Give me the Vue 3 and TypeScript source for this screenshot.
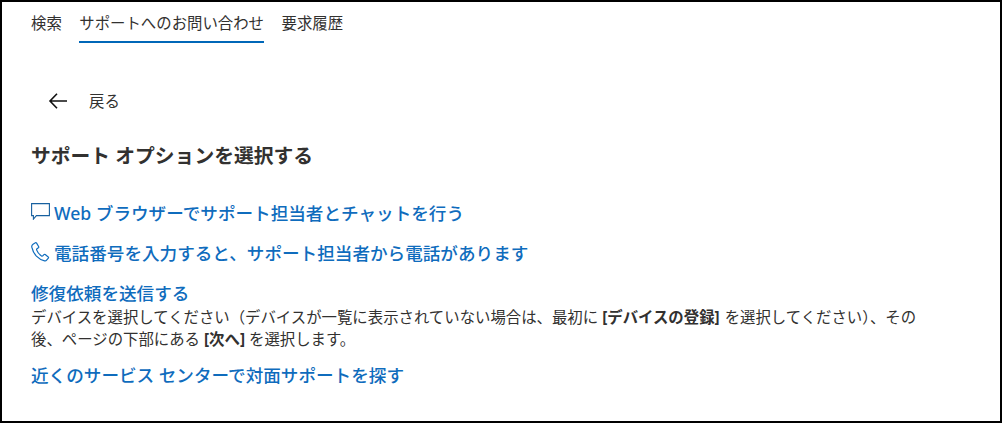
<script setup lang="ts">
const tabs = [
  { label: '検索', active: false },
  { label: 'サポートへのお問い合わせ', active: true },
  { label: '要求履歴', active: false },
]
</script>

<template>
  <div class="frame">
    <nav class="tabs">
      <a v-for="t in tabs" :key="t.label" class="tab" :class="{ active: t.active }">{{ t.label }}</a>
    </nav>
    <div class="back">
      <svg class="back-icon" width="20" height="20" viewBox="0 0 20 20" fill="none" stroke="#111" stroke-width="1.6">
        <path d="M19 10H2M9 2.800 2 10l7 7.200" />
      </svg>
      <span class="back-label">戻る</span>
    </div>
    <h1 class="title">サポート オプションを選択する</h1>
    <div class="options">
      <a class="link">
        <svg class="icon chat" width="19" height="17" viewBox="0 0 19 17" fill="none" stroke="#17609f" stroke-width="1.1">
          <path d="M.6.6h17.800v12H5.400l-3 3.500v-3.500H.6z" />
        </svg>
        <span>Web ブラウザーでサポート担当者とチャットを行う</span>
      </a>
      <a class="link">
        <svg class="icon phone" width="19" height="20" viewBox="0 0 19 20" fill="none" stroke="#0f6cbd" stroke-width="1.2">
          <path d="M2 2.200 4.400.8c.5-.2.9 0 1.200.4l2 3.300c.3.5.2 1-.2 1.300L6 6.800c-.4.300-.5.800-.3 1.300.9 2.400 2.600 4.500 4.800 5.800.5.300 1 .2 1.300-.1l1.100-1.100c.4-.4.900-.4 1.300-.1l3 2.300c.4.300.4.800.1 1.200l-1.700 2c-.5.600-1.300.9-2 .7C7.300 17.600 2.300 12.300.8 5.200c-.2-1.200.2-2.400 1.200-3z" />
        </svg>
        <span>電話番号を入力すると、サポート担当者から電話があります</span>
      </a>
      <div class="repair">
        <a class="link">修復依頼を送信する</a>
        <p class="desc">デバイスを選択してください（デバイスが一覧に表示されていない場合は、最初に <b class="first">[デバイスの登録]</b> を選択してください）、その後、ページの下部にある <b>[次へ]</b> を選択します。</p>
      </div>
      <a class="link">近くのサービス センターで対面サポートを探す</a>
    </div>
  </div>
</template>

<style>
html, body { margin: 0; background: #fff; }
</style>

<style scoped>
.frame {
  box-sizing: border-box;
  width: 1002px;
  height: 423px;
  border: 2px solid #000;
  padding: 0 29px;
  background: #fff;
  color: #323130;
  font-family: "Noto Sans", "Noto Sans CJK JP", sans-serif;
  overflow: hidden;
}
.tabs { display: flex; gap: 17.5px; height: 41px; }
.tab {
  box-sizing: border-box;
  height: 41px;
  padding-top: 11px;
  font-size: 15.4px;
  line-height: 22px;
  white-space: nowrap;
}
.tab.active { border-bottom: 2px solid #0067b8; }
.back {
  display: flex;
  align-items: center;
  gap: 21px;
  margin: 47px 0 0 17px;
  height: 22px;
  font-size: 15.4px;
  line-height: 22px;
}
.back-label { padding-top: 2px; }
.title {
  margin: 30px 0 0;
  font-size: 19.8px;
  line-height: 28px;
  font-weight: 700;
}
.options {
  margin-top: 31px;
  display: flex;
  flex-direction: column;
  gap: 15px;
  width: 890px;
}
.link {
  display: flex;
  align-items: center;
  gap: 4px;
  color: #0f6cbd;
  font-size: 17.6px;
  line-height: 25px;
  font-weight: 500;
}
.chat { margin-bottom: 5px; }
.phone { margin-bottom: 4px; }
.repair { margin-bottom: -3px; }
.desc {
  margin: 1px 0 0;
  font-size: 15.4px;
  line-height: 22px;
}
.desc b { font-weight: 700; }
.desc b.first { margin-right: 1px; }
</style>
